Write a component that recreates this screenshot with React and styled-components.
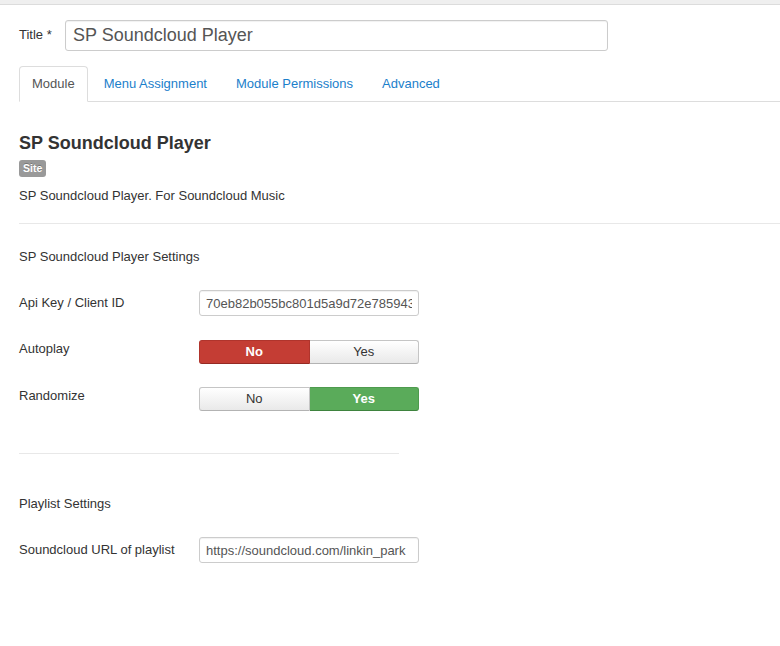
import React from "react";
import styled, { createGlobalStyle, css } from "styled-components";

const GlobalStyle = createGlobalStyle`
  html, body {
    margin: 0;
    padding: 0;
    background: #fff;
  }
  body {
    font-family: "Liberation Sans", Arial, sans-serif;
    font-size: 13px;
    line-height: 18px;
    color: #333;
  }
  * { box-sizing: border-box; }
`;

const TopBar = styled.div`
  height: 5px;
  background: #efefef;
  border-bottom: 1px solid #dcdcdc;
`;

const Page = styled.div`
  padding-left: 19px;
`;

const TitleRow = styled.div`
  display: flex;
  align-items: center;
  margin-top: 15px;
`;

const TitleLabel = styled.label`
  width: 46px;
  font-size: 13px;
  margin-top: -1px;
`;

const TitleInput = styled.input`
  width: 543px;
  height: 31px;
  padding: 0 7px;
  font-family: inherit;
  font-size: 18px;
  color: #555;
  border: 1px solid #ccc;
  border-radius: 3px;
  box-shadow: inset 0 1px 1px rgba(0, 0, 0, 0.06);
  outline: none;
`;

const Tabs = styled.ul`
  display: flex;
  list-style: none;
  margin: 15px 0 0;
  padding: 0;
  border-bottom: 1px solid #ddd;
`;

const Tab = styled.li`
  padding: 7px 12px;
  line-height: 20px;
  margin-right: 3px;
  margin-bottom: -1px;
  border: 1px solid transparent;
  border-radius: 4px 4px 0 0;
  color: #1b80cb;
  ${(p) =>
    p.$active &&
    css`
      color: #555;
      background: #fff;
      border-color: #ddd;
      border-bottom-color: #fff;
    `}
`;

const Heading = styled.h2`
  margin: 30px 0 0;
  font-size: 18px;
  line-height: 22px;
  font-weight: bold;
  color: #333;
`;

const Badge = styled.span`
  display: inline-block;
  margin-top: 6px;
  height: 17px;
  padding: 0 4px;
  font-size: 10.5px;
  line-height: 17px;
  font-weight: bold;
  color: #fff;
  background: #999;
  border-radius: 3px;
  text-shadow: 0 -1px 0 rgba(0, 0, 0, 0.25);
  vertical-align: top;
`;

const Text = styled.p`
  margin: ${(p) => p.$top}px 0 0;
`;

const Rule = styled.hr`
  margin: ${(p) => p.$top}px 0 0;
  border: 0;
  border-top: 1px solid #e8e8e8;
  height: 0;
  width: ${(p) => (p.$short ? "380px" : "auto")};
`;

const Field = styled.div`
  display: grid;
  grid-template-columns: 180px 220px;
  margin-top: ${(p) => p.$top}px;
`;

const FieldLabel = styled.label`
  padding-top: ${(p) => p.$pad || 0}px;
`;

const TextInput = styled.input`
  width: 220px;
  height: 26px;
  padding: 0 6px;
  font-family: inherit;
  font-size: 13px;
  color: #555;
  border: 1px solid #ccc;
  border-radius: 3px;
  box-shadow: inset 0 1px 1px rgba(0, 0, 0, 0.06);
  outline: none;
`;

const Toggle = styled.div`
  display: flex;
  width: 220px;
  height: 24px;
`;

const ToggleButton = styled.span`
  flex: 1;
  display: flex;
  align-items: center;
  justify-content: center;
  font-size: 13px;
  border: 1px solid #c5c5c5;
  border-bottom-color: #b3b3b3;
  color: #333;
  background: linear-gradient(#ffffff, #e9e9e9);
  &:first-child {
    border-radius: 3px 0 0 3px;
  }
  &:last-child {
    border-radius: 0 3px 3px 0;
    border-left: 0;
  }
  ${(p) =>
    p.$tone === "no" &&
    css`
      color: #fff;
      font-weight: bold;
      background: #c43d34;
      border-color: #b0342c;
      border-bottom-color: #952a23;
    `}
  ${(p) =>
    p.$tone === "yes" &&
    css`
      color: #fff;
      font-weight: bold;
      background: #5aab5a;
      border-color: #4e9b4e;
      border-bottom-color: #3e833e;
    `}
`;

function YesNo({ value }) {
  return (
    <Toggle>
      <ToggleButton $tone={value === "no" ? "no" : undefined}>No</ToggleButton>
      <ToggleButton $tone={value === "yes" ? "yes" : undefined}>Yes</ToggleButton>
    </Toggle>
  );
}

export default function App() {
  return (
    <>
      <GlobalStyle />
      <TopBar />
      <Page>
        <TitleRow>
          <TitleLabel>Title *</TitleLabel>
          <TitleInput defaultValue="SP Soundcloud Player" />
        </TitleRow>
        <Tabs>
          <Tab $active>Module</Tab>
          <Tab>Menu Assignment</Tab>
          <Tab>Module Permissions</Tab>
          <Tab>Advanced</Tab>
        </Tabs>
        <Heading>SP Soundcloud Player</Heading>
        <Badge>Site</Badge>
        <Text $top={10}>SP Soundcloud Player. For Soundcloud Music</Text>
        <Rule $top={18} />
        <Text $top={24}>SP Soundcloud Player Settings</Text>
        <Field $top={24}>
          <FieldLabel $pad={4}>Api Key / Client ID</FieldLabel>
          <TextInput defaultValue="70eb82b055bc801d5a9d72e785943c0f" />
        </Field>
        <Field $top={24}>
          <FieldLabel>Autoplay</FieldLabel>
          <YesNo value="no" />
        </Field>
        <Field $top={23}>
          <FieldLabel>Randomize</FieldLabel>
          <YesNo value="yes" />
        </Field>
        <Rule $top={42} $short />
        <Text $top={41}>Playlist Settings</Text>
        <Field $top={24}>
          <FieldLabel $pad={4}>Soundcloud URL of playlist</FieldLabel>
          <TextInput defaultValue="https://soundcloud.com/linkin_park" />
        </Field>
      </Page>
    </>
  );
}
